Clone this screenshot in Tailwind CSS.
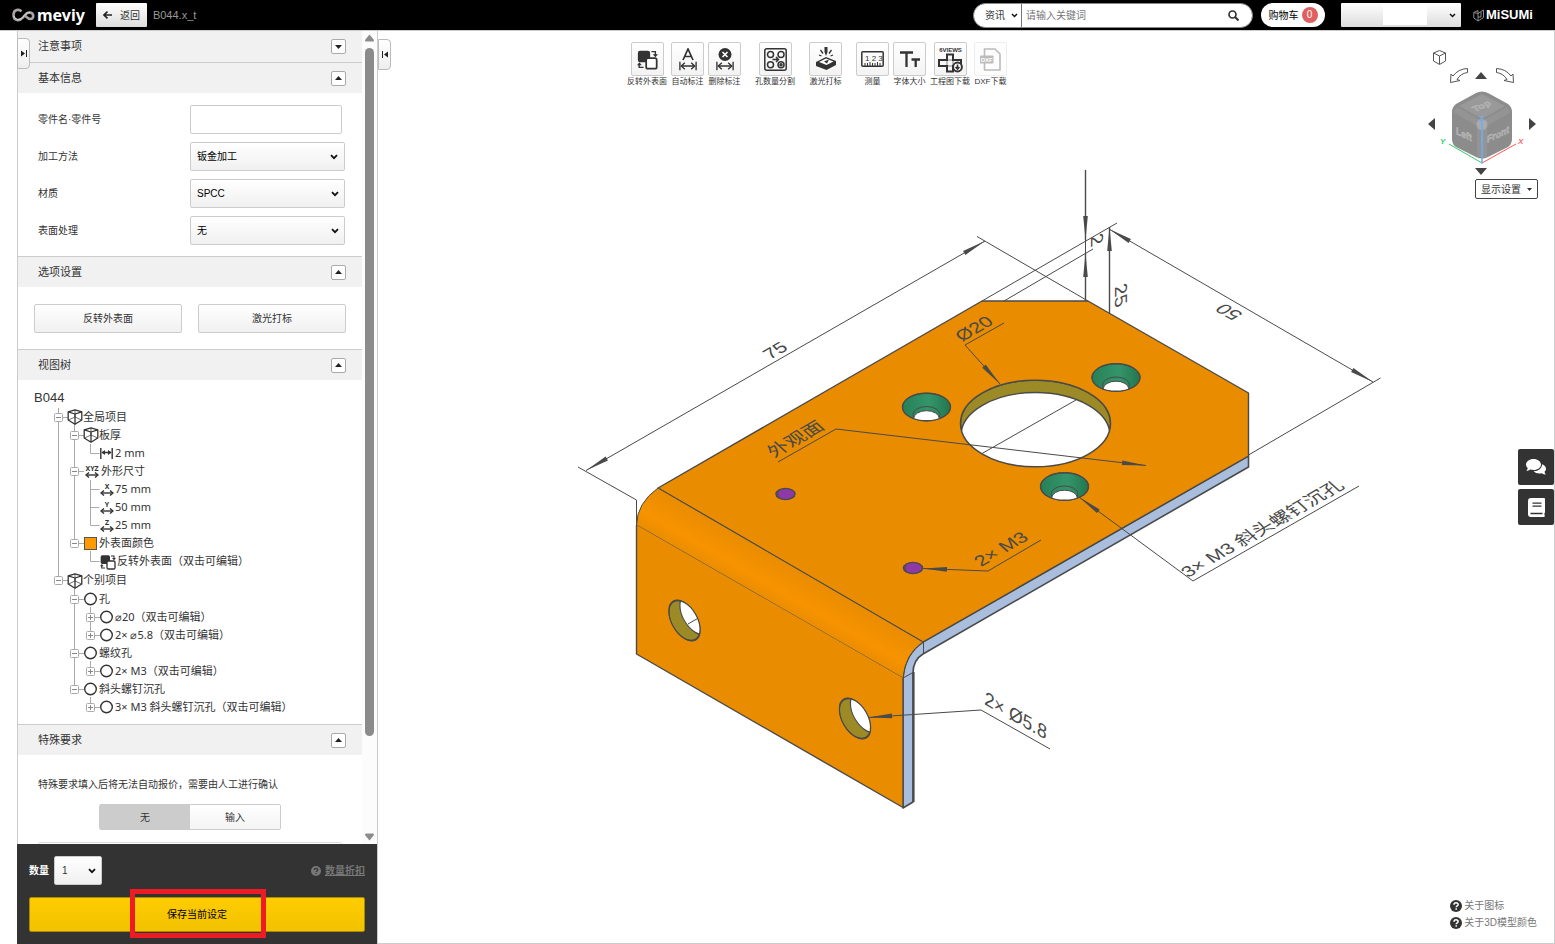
<!DOCTYPE html>
<html lang="zh-CN">
<head>
    <meta charset="utf-8">
    <meta name="viewport" content="width=device-width, initial-scale=1">
    <title>meviy - B044.x_t</title>
    <script src="https://cdn.jsdelivr.net/npm/@tailwindcss/browser@4"></script>
</head>
<body class="h-screen overflow-hidden flex flex-col bg-white text-[#333] text-[10px] font-['Liberation_Sans','Noto_Sans_CJK_SC',sans-serif]">

<!-- shared icons -->
<svg class="hidden">
    <symbol id="minus" viewBox="0 0 9 9"><rect x=".5" y=".5" width="8" height="8" rx="1" fill="#fff" stroke="#aaa"/><path d="M2 4.500h5" stroke="#888"/></symbol>
    <symbol id="plus" viewBox="0 0 9 9"><rect x=".5" y=".5" width="8" height="8" rx="1" fill="#fff" stroke="#aaa"/><path d="M2 4.500h5M4.500 2v5" stroke="#888"/></symbol>
    <symbol id="cube" viewBox="0 0 16 16"><g fill="none" stroke="#333" stroke-width="1.300" stroke-linejoin="round"><path d="M8 .8l6.800 2v8.200L8 15.300 1.200 11V2.800z"/><path d="M1.200 2.800L8 5l6.800-2.200M8 5v10"/><path d="M8 1v7L1.500 11M8 8l6.500 3" stroke-width=".7"/></g></symbol>
    <symbol id="ring" viewBox="0 0 16 16"><circle cx="7.500" cy="8" r="5.800" fill="none" stroke="#333" stroke-width="1.400"/></symbol>
    <symbol id="chevron" viewBox="0 0 8 6"><path d="M1 1.200l3 3 3-3" fill="none" stroke="#111" stroke-width="1.800"/></symbol>
    <symbol id="flip" viewBox="0 0 24 24">
        <rect x="1" y="2" width="14" height="13" rx="2.500" fill="#333"/>
        <rect x="10.500" y="10.500" width="12" height="12" rx="2" fill="#fff" stroke="#333" stroke-width="2"/>
        <path d="M16.500 3h4.500v4M2.500 17.500v3.500h5" fill="none" stroke="#333" stroke-width="1.600"/>
        <path d="M18 6h6l-3 3.500zM0 18.500h5.500l-2.800-3.500z" fill="#333"/>
    </symbol>
    <symbol id="span" viewBox="0 0 20 10"><path d="M1 0v10M19 0v10M3 5h14" stroke="#333" stroke-width="1.500"/><path d="M6.500 1.500L2.500 5l4 3.500M13.500 1.500l4 3.500-4 3.500" fill="none" stroke="#333" stroke-width="1.500"/></symbol>
    <symbol id="both" viewBox="0 0 14 6"><path d="M2 3h10" stroke="#333" stroke-width="1.400"/><path d="M4 .5L1 3l3 2.500M10 .5L13 3l-3 2.500" fill="none" stroke="#333" stroke-width="1.400"/></symbol>
    <symbol id="help" viewBox="0 0 12 12"><circle cx="6" cy="6" r="6" fill="currentColor"/><path d="M4 4.800c0-2.600 4.200-2.500 4.200-.2C8.200 6 6.200 5.900 6.200 7.300M6.200 8.300v1.400" fill="none" stroke="#fff" stroke-width="1.500"/></symbol>
</svg>

<header class="h-[31px] shrink-0 flex items-center bg-black border-b border-[#ccc]">
    <a href="#" class="flex items-center ml-3 text-white text-[16px] leading-5 font-bold font-['Noto_Sans',sans-serif]">
        <svg class="w-[23px] h-[14px] mr-[2px]" viewBox="0 0 23 14"><path d="M9.500 3.500C7.500 1 1.500 1 1.500 7s6 6.500 9.500 2.500C13 7 14.500 4 18 4.500c4.500.7 4 6.500.5 6.500-2.500 0-3.500-1.500-5-3" fill="none" stroke="#aaa3a8" stroke-width="2.600"/><path d="M2 8c1 4 5.500 4.500 8.500 1.500S14.500 4 18 4.500" fill="none" stroke="#ddd" stroke-width="1"/></svg>
        meviy
    </a>
    <button class="w-[51px] h-6 ml-[11px] flex items-center justify-center gap-2 rounded-[1px] bg-linear-to-b from-white to-[#ddd]">
        <svg class="w-[9px] h-2" viewBox="0 0 9 8"><path d="M1 4h8M4.500.7L1 4l3.500 3.300" fill="none" stroke="#222" stroke-width="1.600"/></svg>
        返回
    </button>
    <span class="ml-[6px] text-[#999] text-[11px]">B044.x_t</span>

    <div class="flex items-center ml-auto h-[25px] w-[280px] rounded-full bg-white border border-[#888] overflow-hidden">
        <label class="relative flex items-center h-full">
            <select aria-label="搜索类别" class="appearance-none w-12 h-full pl-[11px] border-r border-[#777]"><option>资讯</option></select>
            <svg class="absolute right-1 w-[7px] h-[5px]"><use href="#chevron"/></svg>
        </label>
        <input type="text" aria-label="关键词" placeholder="请输入关键词" class="flex-1 min-w-0 h-full pl-1 placeholder:text-[#777] outline-none">
        <button aria-label="搜索" class="w-4 h-full mr-2"><svg class="w-[11px] h-[11px]" viewBox="0 0 11 11"><circle cx="4.500" cy="4.500" r="3.500" fill="none" stroke="#333" stroke-width="1.700"/><path d="M7 7l3.500 3.500" stroke="#333" stroke-width="2"/></svg></button>
    </div>
    <a href="#" class="ml-2 w-16 h-6 flex items-center justify-center gap-[3px] rounded-full bg-white text-black">购物车
        <span class="size-4 rounded-full bg-[#e06060] text-white text-center leading-4">0</span>
    </a>
    <label class="relative ml-4 flex items-center">
        <select aria-label="账户" class="appearance-none w-[120px] h-6 rounded-[1px] bg-linear-to-b from-white to-[#ddd]"><option></option></select>
        <span class="absolute left-[42px] w-11 h-5 bg-white"></span>
        <svg class="absolute right-[5px] w-[7px] h-[5px]"><use href="#chevron"/></svg>
    </label>
    <a href="#" class="w-[60px] flex items-center gap-[2px] ml-3 mr-[22px] text-white text-[13px] font-bold">
        <svg class="w-[11px] h-[13px] shrink-0" viewBox="0 0 11 13"><path d="M5 4.500L10.500 1v7.500L5 12zM5 4.500L.8 3.500v5.500L5 12M.8 3.500L5 1.500v3M5 8h3V3" fill="none" stroke="#999" stroke-width=".9"/></svg>
        MiSUMi
    </a>
</header>

<div class="flex-1 min-h-0 flex">
    <aside class="relative w-[361px] shrink-0 ml-[17px] flex flex-col border-x border-[#ccc]">
        <button aria-label="收起左侧" class="absolute -left-px top-[7px] w-[13px] h-[31px] z-10 flex items-center justify-center rounded-r-sm border border-[#bbb] bg-linear-to-b from-white to-[#eee]">
            <svg class="w-[6px] h-[7px]" viewBox="0 0 6 7"><path d="M0 .5L4 3.500 0 6.500z" fill="#222"/><path d="M5.500 0v7" stroke="#222"/></svg>
        </button>

        <div class="flex-1 min-h-0 flex overflow-hidden">
            <div class="flex-1 min-w-0">
                <section>
                    <h2 class="h-[31px] pl-5 pr-4 flex items-center justify-between bg-[#f1f1f1] text-[11px]">注意事项
                        <button aria-label="展开" class="size-[15px] flex items-center justify-center rounded-xs border border-[#aaa] bg-white"><svg class="w-[7px] h-1" viewBox="0 0 7 4"><path d="M0 0h7L3.500 4z" fill="#222"/></svg></button>
                    </h2>
                </section>

                <section>
                    <h2 class="h-[31px] pl-5 pr-4 flex items-center justify-between border-t border-[#ccc] bg-[#f1f1f1] text-[11px]">基本信息
                        <button aria-label="收起" class="size-[15px] flex items-center justify-center rounded-xs border border-[#aaa] bg-white"><svg class="w-[7px] h-1" viewBox="0 0 7 4"><path d="M0 4h7L3.500 0z" fill="#222"/></svg></button>
                    </h2>
                    <div class="pl-5 pt-3 pb-[11px] flex flex-col gap-2">
                        <div class="flex items-center">
                            <label for="part" class="w-[152px]">零件名·零件号</label>
                            <input id="part" type="text" class="w-[152px] h-[29px] px-2 rounded-xs border border-[#ccc]">
                        </div>
                        <div class="relative flex items-center">
                            <label for="method" class="w-[152px]">加工方法</label>
                            <select id="method" class="appearance-none w-[155px] h-[29px] pl-[6px] rounded-xs border border-[#ccc] bg-linear-to-b from-white to-[#f0f0f0] text-black"><option>钣金加工</option></select>
                            <svg class="absolute left-[292px] w-2 h-[6px]"><use href="#chevron"/></svg>
                        </div>
                        <div class="relative flex items-center">
                            <label for="material" class="w-[152px]">材质</label>
                            <select id="material" class="appearance-none w-[155px] h-[29px] pl-[6px] rounded-xs border border-[#ccc] bg-linear-to-b from-white to-[#f0f0f0] text-black"><option>SPCC</option></select>
                            <svg class="absolute left-[293px] w-2 h-[6px]"><use href="#chevron"/></svg>
                        </div>
                        <div class="relative flex items-center">
                            <label for="surface" class="w-[152px]">表面处理</label>
                            <select id="surface" class="appearance-none w-[155px] h-[29px] pl-[6px] rounded-xs border border-[#ccc] bg-linear-to-b from-white to-[#f0f0f0] text-black"><option>无</option></select>
                            <svg class="absolute left-[293px] w-2 h-[6px]"><use href="#chevron"/></svg>
                        </div>
                    </div>
                </section>

                <section>
                    <h2 class="h-[31px] pl-5 pr-4 flex items-center justify-between border-t border-[#ccc] bg-[#f1f1f1] text-[11px]">选项设置
                        <button aria-label="收起" class="size-[15px] flex items-center justify-center rounded-xs border border-[#aaa] bg-white"><svg class="w-[7px] h-1" viewBox="0 0 7 4"><path d="M0 4h7L3.500 0z" fill="#222"/></svg></button>
                    </h2>
                    <div class="px-4 pt-[17px] pb-4 flex gap-4">
                        <button class="flex-1 h-[29px] rounded-xs border border-[#ccc] bg-linear-to-b from-white to-[#f0f0f0]">反转外表面</button>
                        <button class="flex-1 h-[29px] rounded-xs border border-[#ccc] bg-linear-to-b from-white to-[#f0f0f0]">激光打标</button>
                    </div>
                </section>

                <section>
                    <h2 class="h-[31px] pl-5 pr-4 flex items-center justify-between border-t border-[#ccc] bg-[#f1f1f1] text-[11px]">视图树
                        <button aria-label="收起" class="size-[15px] flex items-center justify-center rounded-xs border border-[#aaa] bg-white"><svg class="w-[7px] h-1" viewBox="0 0 7 4"><path d="M0 4h7L3.500 0z" fill="#222"/></svg></button>
                    </h2>
                    <div class="pt-2 pb-2 text-[11px] whitespace-nowrap font-['Noto_Sans','Noto_Sans_CJK_SC',sans-serif]">
                        <div class="h-5 pl-4 text-[13px] leading-5 font-['Liberation_Sans',sans-serif]">B044</div>
                        <div class="relative">
                            <!-- guide lines -->
                            <svg class="absolute left-0 top-0 w-[100px] h-[308px]" viewBox="0 0 100 308">
                                <path fill="none" stroke="#aaa" d="M40.500 0v172M56.500 16v119M56.500 181v100M72.500 36v9.500h9M72.500 72v45.500h9M72.500 81.500h9M72.500 99.500h9M72.500 143v10.500h9M72.500 199v28M72.500 253v10M72.500 289v10M44 9.500h6M44 172.500h6M60 27.500h6M60 63.500h6M60 135.500h6M60 191.500h6M60 245.500h6M60 281.500h6M76 209.500h6M76 227.500h6M76 263.500h6M76 299.500h6"/>
                            </svg>
                            <ul class="relative">
                                <li class="h-[18px] pl-9 flex items-center"><svg class="size-[9px] mr-1"><use href="#minus"/></svg><svg class="size-4"><use href="#cube"/></svg>全局项目</li>
                                <li class="h-[18px] pl-[52px] flex items-center"><svg class="size-[9px] mr-1"><use href="#minus"/></svg><svg class="size-4"><use href="#cube"/></svg>板厚</li>
                                <li class="h-[18px] pl-[82px] flex items-center"><svg class="w-[13px] h-[11px] mr-[2px]" viewBox="0 0 13 11"><path d="M.8 0v11M12.200 0v11M2 4.500h9" stroke="#333" stroke-width="1.400"/><path d="M1.500 4.500L5 2v5zM11.500 4.500L8 2v5z" fill="#333"/></svg>2 mm</li>
                                <li class="h-[18px] pl-[52px] flex items-center"><svg class="size-[9px] mr-1"><use href="#minus"/></svg><span class="w-[18px] flex flex-col items-center text-[7px] leading-[7px] font-bold">XYZ<svg class="w-[14px] h-[6px]"><use href="#both"/></svg></span>外形尺寸</li>
                                <li class="h-[18px] pl-[82px] flex items-center"><span class="w-[14px] mr-px flex flex-col items-center text-[7px] leading-[7px] font-bold">X<svg class="w-[14px] h-[6px]"><use href="#both"/></svg></span>75 mm</li>
                                <li class="h-[18px] pl-[82px] flex items-center"><span class="w-[14px] mr-px flex flex-col items-center text-[7px] leading-[7px] font-bold">Y<svg class="w-[14px] h-[6px]"><use href="#both"/></svg></span>50 mm</li>
                                <li class="h-[18px] pl-[82px] flex items-center"><span class="w-[14px] mr-px flex flex-col items-center text-[7px] leading-[7px] font-bold">Z<svg class="w-[14px] h-[6px]"><use href="#both"/></svg></span>25 mm</li>
                                <li class="h-[18px] pl-[52px] flex items-center"><svg class="size-[9px] mr-[5px]"><use href="#minus"/></svg><span class="size-[13px] mr-[2px] bg-[#ff9900] border border-[#555]"></span>外表面颜色</li>
                                <li class="h-[19px] pl-[82px] flex items-center"><svg class="size-4 mr-px"><use href="#flip"/></svg>反转外表面（双击可编辑）</li>
                                <li class="h-[19px] pl-9 flex items-center"><svg class="size-[9px] mr-1"><use href="#minus"/></svg><svg class="size-4"><use href="#cube"/></svg>个别项目</li>
                                <li class="h-[18px] pl-[52px] flex items-center"><svg class="size-[9px] mr-1"><use href="#minus"/></svg><svg class="size-4"><use href="#ring"/></svg>孔</li>
                                <li class="h-[18px] pl-[68px] flex items-center"><svg class="size-[9px] mr-1"><use href="#plus"/></svg><svg class="size-4"><use href="#ring"/></svg>⌀20（双击可编辑）</li>
                                <li class="h-[18px] pl-[68px] flex items-center"><svg class="size-[9px] mr-1"><use href="#plus"/></svg><svg class="size-4"><use href="#ring"/></svg>2× ⌀5.8（双击可编辑）</li>
                                <li class="h-[18px] pl-[52px] flex items-center"><svg class="size-[9px] mr-1"><use href="#minus"/></svg><svg class="size-4"><use href="#ring"/></svg>螺纹孔</li>
                                <li class="h-[18px] pl-[68px] flex items-center"><svg class="size-[9px] mr-1"><use href="#plus"/></svg><svg class="size-4"><use href="#ring"/></svg>2× M3（双击可编辑）</li>
                                <li class="h-[18px] pl-[52px] flex items-center"><svg class="size-[9px] mr-1"><use href="#minus"/></svg><svg class="size-4"><use href="#ring"/></svg>斜头螺钉沉孔</li>
                                <li class="h-[18px] pl-[68px] flex items-center"><svg class="size-[9px] mr-1"><use href="#plus"/></svg><svg class="size-4"><use href="#ring"/></svg>3× M3 斜头螺钉沉孔（双击可编辑）</li>
                            </ul>
                        </div>
                    </div>
                </section>

                <section>
                    <h2 class="h-[31px] pl-5 pr-4 flex items-center justify-between border-t border-[#ccc] bg-[#f1f1f1] text-[11px]">特殊要求
                        <button aria-label="收起" class="size-[15px] flex items-center justify-center rounded-xs border border-[#aaa] bg-white"><svg class="w-[7px] h-1" viewBox="0 0 7 4"><path d="M0 4h7L3.500 0z" fill="#222"/></svg></button>
                    </h2>
                    <div class="pl-5 pr-5 pt-5">
                        <p class="leading-5">特殊要求填入后将无法自动报价，需要由人工进行确认</p>
                        <div class="mt-[9px] mx-auto w-[182px] h-[26px] flex rounded-xs border border-[#ccc] overflow-hidden">
                            <button class="flex-1 bg-[#ccc]">无</button>
                            <button class="flex-1 bg-linear-to-b from-white to-[#f4f4f4]">输入</button>
                        </div>
                        <textarea aria-label="特殊要求" class="block mt-3 w-full h-20 rounded-xs border border-[#ddd] resize-none"></textarea>
                    </div>
                </section>
            </div>

            <!-- scroll bar -->
            <div class="w-[15px] shrink-0 py-[3px] flex flex-col items-center bg-[#fcfcfc]">
                <svg class="w-[9px] h-2" viewBox="0 0 9 8"><path d="M4.500 .5L9 6q0 1.500-1 1.500H1Q0 7.500 0 6z" fill="#8b8b8b"/></svg>
                <div class="w-[9px] h-[688px] mt-[6px] rounded-full bg-[#8b8b8b]"></div>
                <svg class="w-[9px] h-2 mt-auto" viewBox="0 0 9 8"><path d="M4.500 7.500L9 2Q9 .5 8 .5H1Q0 .5 0 2z" fill="#8b8b8b"/></svg>
            </div>
        </div>

        <div class="h-[100px] shrink-0 -ml-px pl-3 pr-3 pt-3 bg-[#333]">
            <div class="flex items-center">
                <label for="qty" class="mr-[5px] text-white font-bold">数量</label>
                <div class="relative flex items-center">
                    <select id="qty" class="appearance-none w-12 h-[29px] pl-[7px] rounded-xs border border-[#ccc] bg-linear-to-b from-white to-[#f0f0f0]"><option>1</option></select>
                    <svg class="absolute right-[6px] w-2 h-[6px]"><use href="#chevron"/></svg>
                </div>
                <a href="#" class="ml-auto flex items-center gap-1 text-[#777] font-bold underline"><svg class="size-[10px]" viewBox="0 0 12 12"><circle cx="6" cy="6" r="6" fill="#777"/><path d="M4 4.800c0-2.600 4.200-2.500 4.200-.2C8.200 6 6.200 5.900 6.200 7.300M6.200 8.300v1.400" fill="none" stroke="#333" stroke-width="1.500"/></svg>数量折扣</a>
            </div>
            <div class="relative mt-3">
                <button class="block w-full h-[35px] rounded-xs border border-[#a98a00] bg-linear-to-b from-[#ffcc00] to-[#f2c200] text-black">保存当前设定</button>
                <span class="absolute left-[101px] -top-2 w-[136px] h-[49px] border-5 border-[#ed1c24] pointer-events-none"></span>
            </div>
        </div>
    </aside>

    <main class="relative flex-1 min-w-0 border-r border-b border-[#ccc]">
        <svg class="absolute inset-0 w-full h-full" viewBox="378 31 1176 912" font-size="20" fill="none" stroke="#4a4a4a" stroke-width="1" stroke-linejoin="round">
            <defs>
                <marker id="arrow" markerUnits="userSpaceOnUse" orient="auto-start-reverse" overflow="visible" markerWidth="30" markerHeight="10"><path d="M0 0L-24 -2.300V2.300z" fill="#4a4a4a" stroke="none"/></marker>
                <linearGradient id="bend" gradientUnits="userSpaceOnUse" x1="790" y1="564" x2="768" y2="602"><stop offset="0" stop-color="#e98c00"/><stop offset=".65" stop-color="#f79300"/><stop offset="1" stop-color="#e98c00"/></linearGradient>
                <linearGradient id="green"><stop offset="0" stop-color="#268058"/><stop offset=".55" stop-color="#35956a"/><stop offset="1" stop-color="#23774f"/></linearGradient>
                <clipPath id="bore"><ellipse cx="1035.500" cy="423.500" rx="75" ry="43.300"/></clipPath>
                <clipPath id="sinkClip"><ellipse rx="24" ry="13.800"/></clipPath>
                <clipPath id="holeClip"><circle r="18" transform="matrix(.866 .5 0 1 0 0)"/></clipPath>
                <g id="sink">
                    <ellipse rx="24" ry="13.800" fill="url(#green)"/>
                    <g clip-path="url(#sinkClip)"><ellipse cy="7.500" rx="13.500" ry="8"/><ellipse cy="11.500" rx="12.800" ry="7.800" fill="#fff"/></g>
                    <ellipse rx="24" ry="13.800" stroke-width="1.400"/>
                </g>
                <g id="hole">
                    <circle r="18" transform="matrix(.866 .5 0 1 0 0)" fill="#9b8a25"/>
                    <g clip-path="url(#holeClip)"><circle r="18" transform="matrix(.866 .5 0 1 11 -6)" fill="#fff" stroke-width="1.400"/></g>
                    <circle r="18" transform="matrix(.866 .5 0 1 0 0)" stroke-width="1.500"/>
                </g>
            </defs>

            <!-- bracket -->
            <path d="M923 642L1248.500 456V467L923 654Q913 660 913 673V802L903 808V678Q905 654 923 642z" fill="#a9bddd" stroke-width="1.600"/>
            <path d="M913.500 672V802" stroke-width="2.200"/>
            <path d="M658 488L982 301H1088L1248.500 393V456L923 642z" fill="#e98c00" stroke-width="1.400"/>
            <path d="M658 488L923 642Q905 654 903 678L636.500 525Q637 503 658 488z" fill="url(#bend)"/>
            <path d="M636.500 525V654L903 807.500V678z" fill="#e98c00" stroke="none"/>
            <path d="M636.500 525V654L903 807.500V678" stroke-width="1.400"/>
            <path d="M923.500 642V654M903 678L913 672.500"/>

            <g clip-path="url(#bore)">
                <ellipse cx="1035.500" cy="423.500" rx="75" ry="43.300" fill="#9b8a25"/>
                <ellipse cx="1035.500" cy="435.500" rx="74.500" ry="43" fill="#fff" stroke-width="1.400"/>
                <path d="M1076 400L982 453.500"/>
            </g>
            <ellipse cx="1035.500" cy="423.500" rx="75" ry="43.300" stroke-width="1.500"/>
            <use href="#sink" x="926.500" y="407"/>
            <use href="#sink" x="1116" y="377.500"/>
            <use href="#sink" x="1064.500" y="486.500"/>
            <use href="#hole" x="684.500" y="620.500"/>
            <use href="#hole" x="855" y="718.500"/>
            <path d="M688 624l9.500-5.500"/>
            <g fill="#8e3aa6" stroke-width="1.400"><ellipse cx="785.500" cy="494" rx="9.500" ry="5.600"/><ellipse cx="913" cy="568" rx="9.500" ry="5.600"/></g>
            <path d="M778.500 491q-2 3 0 6M906 565q-2 3 0 6"/>

            <!-- dimensions and leaders -->
            <path d="M586 470.500L985 241" marker-start="url(#arrow)" marker-end="url(#arrow)"/>
            <path d="M578 467L636.500 500V525M977 236.500L1088 301M982 301L1117 223M1004 301L1093 249"/>
            <path d="M1085.500 170V240" stroke-width="1.400" marker-end="url(#arrow)"/>
            <path d="M1085.500 301V253" stroke-width="1.400" marker-end="url(#arrow)"/>
            <path d="M1085.500 240V253"/>
            <path d="M1109.500 313V227" stroke-width="1.400" marker-end="url(#arrow)"/>
            <path d="M1109 229L1373 382" marker-start="url(#arrow)" marker-end="url(#arrow)"/>
            <path d="M1380.500 378L1248.500 455"/>
            <path d="M1004 323L965 345L1000 384" marker-end="url(#arrow)"/>
            <path d="M778 462L836 429L1146 465.500" marker-end="url(#arrow)"/>
            <path d="M1359 486L1193 581L1079 497" marker-end="url(#arrow)"/>
            <path d="M1041 540L988 571L923 568.500" marker-end="url(#arrow)"/>
            <path d="M1050 749L981 710L868 717.500" marker-end="url(#arrow)"/>

            <!-- labels lie in the planes of the dimensions -->
            <g fill="#4a4a4a" stroke="none">
                <text transform="matrix(.866 -.5 .64 .58 770 360)">75</text>
                <text transform="matrix(.866 -.5 .64 .58 774 458)">外观面</text>
                <text transform="matrix(.866 -.5 .64 .58 962 342)">Ø20</text>
                <text transform="matrix(.866 -.5 .64 .58 981 567)">2× M3</text>
                <text transform="matrix(.866 -.5 .64 .58 1188 578)">3× M3 斜头螺钉沉孔</text>
                <text transform="matrix(-.866 -.5 .8 -.5 1244 314)">50</text>
                <text transform="matrix(0 1 -.866 .4 1115 287)">25</text>
                <text transform="matrix(0 1 -.866 .4 1091 237)">2</text>
                <text transform="matrix(.866 .5 -.1 .95 984 704)">2× Ø5.8</text>
            </g>
        </svg>

        <button aria-label="展开面板" class="absolute left-0 top-2 w-[13px] h-[31px] flex items-center justify-center rounded-r-sm border border-[#bbb] bg-linear-to-b from-white to-[#eee]">
            <svg class="w-[6px] h-[7px]" viewBox="0 0 6 7"><path d="M6 .5L2 3.500l4 3z" fill="#222"/><path d="M.5 0v7" stroke="#222"/></svg>
        </button>

        <div class="relative w-max ml-[249px] mt-[11px] flex gap-[14px] text-[8px] leading-[12px]">
            <div class="flex gap-1">
                <button class="flex flex-col items-center"><span class="w-[33px] h-[34px] flex items-center justify-center rounded-xs border border-[#ccc] bg-linear-to-b from-white to-[#f3f3f3]">
                    <svg class="size-[21px]"><use href="#flip"/></svg></span>反转外表面</button>
                <button class="flex flex-col items-center"><span class="w-[33px] h-[34px] flex items-center justify-center rounded-xs border border-[#ccc] bg-linear-to-b from-white to-[#f3f3f3]">
                    <svg class="w-5 h-[23px]" viewBox="0 0 20 23" fill="none" stroke="#333" stroke-width="1.700"><path d="M5 12L10 1l5 11M7 8.500h6"/><use href="#span" y="13.500" width="20" height="9"/></svg></span>自动标注</button>
                <button class="flex flex-col items-center"><span class="w-[33px] h-[34px] flex items-center justify-center rounded-xs border border-[#ccc] bg-linear-to-b from-white to-[#f3f3f3]">
                    <svg class="w-5 h-[23px]" viewBox="0 0 20 23"><circle cx="10" cy="6.500" r="6.500" fill="#333"/><path d="M7.500 4l5 5M12.500 4l-5 5" stroke="#fff" stroke-width="1.600"/><use href="#span" y="13.500" width="20" height="9"/></svg></span>删除标注</button>
            </div>
            <button class="flex flex-col items-center"><span class="w-[33px] h-[34px] flex items-center justify-center rounded-xs border border-[#ccc] bg-linear-to-b from-white to-[#f3f3f3]">
                <svg class="size-[23px]" viewBox="0 0 23 23" fill="none" stroke="#333" stroke-width="1.500"><rect x=".8" y=".8" width="21.400" height="21.400" rx="2"/><circle cx="6.500" cy="6.500" r="3"/><circle cx="17" cy="6.500" r="3"/><circle cx="6.500" cy="16.800" r="3"/><circle cx="17" cy="16.800" r="3"/><circle cx="17" cy="16.800" r="1"/><path d="M8.500 11.500h6M12 9l2.500 2.500L12 14"/></svg></span>孔数量分割</button>
            <button class="flex flex-col items-center"><span class="w-[33px] h-[34px] flex items-center justify-center rounded-xs border border-[#ccc] bg-linear-to-b from-white to-[#f3f3f3]">
                <svg class="w-[22px] h-[24px]" viewBox="0 0 22 24"><path d="M1 15l10-5 10 4v4L11.500 23 1 19z" fill="#333"/><path d="M4 15l7-3.500 7.500 3L11.500 18z" fill="#fff"/><path d="M9 14.500l5-2-2 4z" fill="#333"/><path d="M5.500 3l2.500 3.500M16.500 3L14 6.500M4 8l2.500 1M18 8l-2.500 1" stroke="#333" stroke-width="1.300"/><path d="M9.500 0h3v5l-1.500 4-1.500-4z" fill="#333"/></svg></span>激光打标</button>
            <div class="flex gap-1">
                <button class="flex flex-col items-center"><span class="w-[33px] h-[34px] flex items-center justify-center rounded-xs border border-[#ccc] bg-linear-to-b from-white to-[#f3f3f3]">
                    <svg class="w-[23px] h-4" viewBox="0 0 23 16"><rect x=".8" y=".8" width="21.400" height="14.400" rx="1" fill="none" stroke="#333" stroke-width="1.500"/><path d="M4 15v-3M6.500 15v-3M9 15v-4M11.500 15v-3M14 15v-3M16.500 15v-4M19 15v-3" stroke="#333"/><text x="4" y="10" font-size="8" fill="#333">1 2 3</text></svg></span>测量</button>
                <button class="flex flex-col items-center"><span class="w-[33px] h-[34px] flex items-center justify-center rounded-xs border border-[#ccc] bg-linear-to-b from-white to-[#f3f3f3]">
                    <svg class="w-5 h-[17px]" viewBox="0 0 20 17"><path d="M0 1.500h13M6.500 1v15M11.500 8.500h8.500M15.700 8v8" stroke="#333" stroke-width="2.300"/></svg></span>字体大小</button>
                <button class="flex flex-col items-center"><span class="w-[33px] h-[34px] flex items-center justify-center rounded-xs border border-[#ccc] bg-linear-to-b from-white to-[#f3f3f3]">
                    <svg class="w-[25px] h-[27px]" viewBox="0 0 25 27" fill="none" stroke="#333" stroke-width="1.600"><text x="12.500" y="6" text-anchor="middle" font-size="6" font-weight="bold" fill="#333" stroke="none">6VIEWS</text><path d="M9 8.500h6v5.500h8v6h-8v5.500H9V20H1v-6h8z" stroke-width="2"/><path d="M9 14h6v6H9z" stroke-width=".6"/><circle cx="19.500" cy="21" r="4.400" fill="#fff" stroke-width="2"/><path d="M19.500 18.500v4M17.500 21l2 2 2-2"/></svg></span>工程图下载</button>
                <button class="flex flex-col items-center"><span class="w-[33px] h-[34px] flex items-center justify-center rounded-xs border border-[#eee] bg-[#fdfdfd]">
                    <svg class="w-[21px] h-[23px]" viewBox="0 0 21 23"><path d="M4.500 1h10.500l5 5v16H4.500z" fill="none" stroke="#bbb" stroke-width="1.600" stroke-linejoin="round"/><rect y="7.500" width="13.500" height="8" rx="1" fill="#bbb"/><text x="6.700" y="13.700" text-anchor="middle" font-size="6" font-weight="bold" fill="#fff">DXF</text></svg></span>DXF下载</button>
            </div>
        </div>

        <!-- view cube -->
        <div class="absolute right-4 top-[14px] flex flex-col items-end">
            <svg class="w-[115px] h-[134px]" viewBox="1423 45 115 134">
                <path d="M1439.500 50.500l6 2.500v8l-6 3.500-6-3.500v-8zM1433.500 53l6 3 6-3M1439.500 56v8" fill="none" stroke="#555"/>
                <path d="M1467.500 68.500v4q-7 1-10.500 7l3 1-9.500 2 .500-8.500 2 2q5-7 14.500-7.500zM1496.500 68.500v4q7 1 10.500 7l-3 1 9.500 2-.500-8.500-2 2q-5-7-14.500-7.500z" fill="#fff" stroke="#555"/>
                <path d="M1475 79h12l-6-7zM1475 168h12l-6 7zM1435 118v12l-7-6zM1529 118v12l7-6z" fill="#444"/>
                <path d="M1476 93q6-3 12 0l20 11q4 3 4 8v27q0 5-4 8l-20 10q-6 3-12 0l-20-10q-4-3-4-8v-27q0-5 4-8z" fill="#8c8c8c"/>
                <path d="M1482 94l23 12-23 13-23-13z" fill="#999"/>
                <path d="M1453 112l4-5 25 14 25-14 4 5-24 14v31h-10v-31z" fill="#949494"/>
                <circle cx="1482" cy="124.500" r="5.500" fill="#aaa"/>
                <g fill="#a6a6a6" stroke="#c4c4c4" stroke-width=".4" font-weight="bold">
                    <text transform="matrix(.866 -.4 .5 .6 1475 112)" font-size="11">Top</text>
                    <text transform="matrix(.866 .4 0 1 1456 134)" font-size="10">Left</text>
                    <text transform="matrix(.866 -.4 0 1 1487 143)" font-size="10">Front</text>
                </g>
                <path d="M1482 163l-33-19" stroke="#3c6"/><path d="M1482 163l34-19" stroke="#f55"/><path d="M1482 163.500V121" stroke="#6ab0f0" stroke-width="1.600"/>
                <g font-size="8" font-style="italic" font-weight="bold"><text x="1440" y="144" fill="#3c6">Y</text><text x="1518" y="144" fill="#f66">X</text><text x="1479" y="121" fill="#6ab0f0">Z</text></g>
            </svg>
            <button class="w-[63px] h-5 flex items-center justify-center gap-[6px] rounded-xs border border-[#444] bg-white">显示设置
                <svg class="w-[5px] h-[3px]" viewBox="0 0 5 3"><path d="M0 0h5L2.500 3z" fill="#333"/></svg>
            </button>
        </div>

        <div class="absolute right-0 top-[418px] flex flex-col gap-1">
            <button aria-label="咨询" class="size-9 flex items-center justify-center rounded-xs bg-[#333]"><svg class="w-5 h-4" viewBox="0 0 20 16" fill="#fff"><path d="M7.500 0c4.200 0 7.500 2.500 7.500 5.500S11.700 11 7.500 11q-1.500 0-3-.4Q2.500 12 .3 12q1.300-1.400 1.400-3Q0 7.500 0 5.500C0 2.500 3.300 0 7.500 0z"/><path d="M16 5.200c2.400.8 4 2.500 4 4.500q0 1.800-1.500 3.100.2 1.500 1.400 2.800-2.300 0-4.200-1.400-5.200 1-8.200-2C12.500 12.300 16.200 9 16 5.200z"/></svg></button>
            <button aria-label="指南" class="size-9 flex items-center justify-center rounded-xs bg-[#333]"><svg class="w-[17px] h-[19px]" viewBox="0 0 17 19"><path d="M3 0h13q1 0 1 1v13.500q-1 .5-.3 3 .3 1.500-.7 1.500H3q-3 0-3-3V3q0-3 3-3z" fill="#fff"/><path d="M4.500 5.200h9M4.500 8.200h9M2.500 15.500h12" stroke="#333" stroke-width="1.300"/></svg></button>
        </div>

        <div class="absolute right-[17px] bottom-3 flex flex-col gap-[1px] leading-4 text-[#777]">
            <a href="#" class="flex items-center gap-[2px]"><svg class="size-3 text-[#333]"><use href="#help"/></svg>关于图标</a>
            <a href="#" class="flex items-center gap-[2px]"><svg class="size-3 text-[#333]"><use href="#help"/></svg>关于3D模型颜色</a>
        </div>
    </main>
</div>
</body>
</html>
